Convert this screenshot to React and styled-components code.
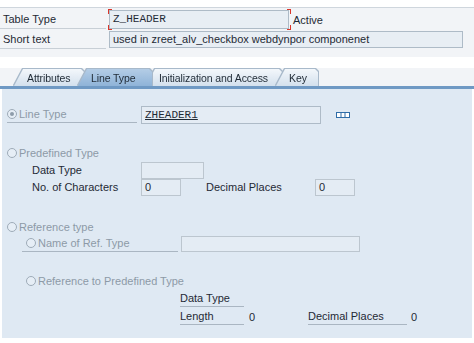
import React from 'react';
import styled, { createGlobalStyle } from 'styled-components';

const GlobalStyle = createGlobalStyle`
    html, body {
        margin: 0;
        padding: 0;
        background: #ffffff;
        font-family: "Liberation Sans", Arial, sans-serif;
        font-size: 11px;
    }
`;

const Page = styled.div`
    width: 474px;
    height: 343px;
    overflow: hidden;
    background: #ffffff;
`;

const Header = styled.div`
    margin-top: 7px;
    border-top: 1px solid #cfd6dd;
    background: #f2f4f7;
    padding: 2px 0 0 0;
    display: flex;
    flex-direction: column;
    gap: 1px;
    height: 50px;
    box-sizing: border-box;
`;

const HeaderRow = styled.div`
    display: flex;
    align-items: center;
    height: 19px;
`;

const HeaderLabel = styled.div`
    width: 106px;
    height: 19px;
    line-height: 19px;
    padding-left: 3px;
    box-sizing: border-box;
    color: #1f2a35;
    border-bottom: 1px solid #c8cfd6;
    margin-right: 3px;
`;

const Field = styled.div`
    position: relative;
    width: ${(p) => p.$w}px;
    height: ${(p) => p.$h || 17}px;
    line-height: ${(p) => (p.$h || 17) - 2}px;
    box-sizing: border-box;
    border: 1px solid ${(p) => (p.$dim ? '#bcc6cf' : '#aebbc7')};
    background: ${(p) => p.$bg || '#e9eff5'};
    padding-left: 3px;
    color: #1f2a35;
    font-family: ${(p) => (p.$mono ? '"Liberation Mono", "Courier New", monospace' : 'inherit')};
    font-size: 11px;
    white-space: nowrap;
`;

/* red focus corners around the required field */
const Bracket = styled.span`
    position: absolute;
    top: -2px;
    bottom: -2px;
    width: 3px;
    ${(p) => (p.$side === 'left' ? 'left: -2px;' : 'right: -2px;')}

    &::before,
    &::after {
        content: '';
        position: absolute;
        left: 0;
        width: 3px;
        height: 4px;
        ${(p) => (p.$side === 'left' ? 'border-left: 1px solid #d9362b;' : 'border-right: 1px solid #d9362b;')}
    }

    &::before {
        top: 0;
        border-top: 1px solid #d9362b;
    }

    &::after {
        bottom: 0;
        border-bottom: 1px solid #d9362b;
    }
`;

const StatusText = styled.span`
    margin-left: 4px;
    color: #1f2a35;
`;

const TabStrip = styled.div`
    display: flex;
    align-items: flex-end;
    height: 18px;
    margin-top: 11px;
    padding-left: 14px;
    border-bottom: 3px solid #6f99c4;
    background: #f2f4f7;
`;

const TabShape = styled.div`
    margin-left: ${(p) => (p.$first ? 0 : -6)}px;
    position: relative;
    z-index: ${(p) => (p.$active ? 2 : 1)};
    filter: drop-shadow(-1px 0 0 #a8b9ca) drop-shadow(0 -1px 0 #a8b9ca) drop-shadow(1px 0 0 #a8b9ca);
`;

const Tab = styled.div`
    height: 17px;
    line-height: 18px;
    padding: 0 0 0 ${(p) => p.$pl || 13}px;
    width: ${(p) => p.$w}px;
    box-sizing: border-box;
    color: #1f2a35;
    font-size: 10.5px;
    letter-spacing: -0.1px;
    white-space: nowrap;
    clip-path: polygon(0 100%, 9px 0, calc(100% - 3px) 0, 100% 3px, 100% 100%);
    background: ${(p) => (p.$active ? 'linear-gradient(#b4cde6, #8fb3d8)' : 'linear-gradient(#f3f7fb, #d3e0ed)')};
`;

const Panel = styled.div`
    margin: 0 2px;
    height: 249px;
    background: #dfe9f3;
    padding-top: 17px;
    box-sizing: border-box;
`;

const Row = styled.div`
    display: flex;
    align-items: center;
    height: 17px;
    margin-top: ${(p) => p.$mt || 0}px;
    padding-left: ${(p) => p.$pl || 0}px;
`;

const Radio = styled.span`
    display: inline-block;
    width: 8px;
    height: 8px;
    border: 1px solid #9eabb8;
    border-radius: 50%;
    margin-right: 2px;
    margin-left: ${(p) => p.$ml || 0}px;
    position: relative;
    flex-shrink: 0;
    background: #e6eef6;

    ${(p) => p.$checked && `
        &::after {
            content: '';
            position: absolute;
            left: 2px;
            top: 2px;
            width: 4px;
            height: 4px;
            border-radius: 50%;
            background: #8e9caa;
        }
    `}
`;

const RadioLabel = styled.div`
    display: flex;
    align-items: center;
    width: ${(p) => (p.$w ? `${p.$w}px` : 'auto')};
    height: 17px;
    box-sizing: border-box;
    color: #8d9aa7;
    border-bottom: ${(p) => (p.$line ? '1px solid #aab6c2' : 'none')};
    margin-right: ${(p) => p.$mr || 0}px;
`;

const Label = styled.div`
    width: ${(p) => p.$w}px;
    height: 17px;
    line-height: 17px;
    box-sizing: border-box;
    color: #1f2a35;
    margin-left: ${(p) => p.$ml || 0}px;
    margin-right: ${(p) => p.$mr || 0}px;
    border-bottom: ${(p) => (p.$line ? '1px solid #aab6c2' : 'none')};
    flex-shrink: 0;
`;

const Value = styled.span`
    color: #1f2a35;
    width: ${(p) => p.$w || 'auto'}px;
    flex-shrink: 0;
`;

const Underlined = styled.span`
    text-decoration: underline;
    color: #1f2a35;
`;

const MoreButton = styled.svg`
    margin-left: 15px;
`;

function App() {
    return (
        <Page>
            <GlobalStyle />
            <Header>
                <HeaderRow>
                    <HeaderLabel>Table Type</HeaderLabel>
                    <Field $w={180} $h={19} $mono $bg="#e8eef4">
                        <Bracket $side="left" />
                        Z_HEADER
                        <Bracket $side="right" />
                    </Field>
                    <StatusText>Active</StatusText>
                </HeaderRow>
                <HeaderRow>
                    <HeaderLabel>Short text</HeaderLabel>
                    <Field $w={354} $bg="#e8eef4">used in zreet_alv_checkbox webdynpor componenet</Field>
                </HeaderRow>
            </Header>
            <TabStrip>
                <TabShape $first>
                    <Tab $w={70}>Attributes</Tab>
                </TabShape>
                <TabShape $active>
                    <Tab $w={74} $active>Line Type</Tab>
                </TabShape>
                <TabShape>
                    <Tab $w={136}>Initialization and Access</Tab>
                </TabShape>
                <TabShape>
                    <Tab $w={42}>Key</Tab>
                </TabShape>
            </TabStrip>
            <Panel>
                <Row $pl={5}>
                    <RadioLabel $w={130} $line $mr={4}>
                        <Radio $checked />
                        Line Type
                    </RadioLabel>
                    <Field $w={180} $h={18} $mono $bg="#e4ecf4">
                        <Underlined>ZHEADER1</Underlined>
                    </Field>
                    <MoreButton width="14" height="6" viewBox="0 0 14 6">
                        <rect x="0.5" y="0.5" width="13" height="5" fill="#ffffff" stroke="#2f6da8" />
                        <line x1="5" y1="0.5" x2="5" y2="5.5" stroke="#2f6da8" />
                        <line x1="9" y1="0.5" x2="9" y2="5.5" stroke="#2f6da8" />
                    </MoreButton>
                </Row>
                <Row $pl={5} $mt={21}>
                    <RadioLabel>
                        <Radio />
                        Predefined Type
                    </RadioLabel>
                </Row>
                <Row $mt={1}>
                    <Label $ml={30} $w={109}>Data Type</Label>
                    <Field $w={63} $h={17} $dim $bg="#e4ecf4" />
                </Row>
                <Row $mt={0}>
                    <Label $ml={30} $w={109}>No. of Characters</Label>
                    <Field $w={40} $h={17} $dim $bg="#e4ecf4">0</Field>
                    <Label $ml={25} $w={109}>Decimal Places</Label>
                    <Field $w={40} $h={17} $dim $bg="#e4ecf4">0</Field>
                </Row>
                <Row $pl={5} $mt={22}>
                    <RadioLabel>
                        <Radio />
                        Reference type
                    </RadioLabel>
                </Row>
                <Row $pl={20} $mt={0}>
                    <RadioLabel $w={156} $line $mr={3}>
                        <Radio $ml={4} />
                        Name of Ref. Type
                    </RadioLabel>
                    <Field $w={179} $h={16} $dim $bg="#e4ecf4" />
                </Row>
                <Row $pl={24} $mt={20}>
                    <RadioLabel>
                        <Radio />
                        Reference to Predefined Type
                    </RadioLabel>
                </Row>
                <Row $mt={1}>
                    <Label $ml={178} $w={64} $line>Data Type</Label>
                </Row>
                <Row $mt={1}>
                    <Label $ml={178} $w={64} $line $mr={5}>Length</Label>
                    <Value $w={59}>0</Value>
                    <Label $w={99} $line $mr={4}>Decimal Places</Label>
                    <Value>0</Value>
                </Row>
            </Panel>
        </Page>
    );
}

export default App;
